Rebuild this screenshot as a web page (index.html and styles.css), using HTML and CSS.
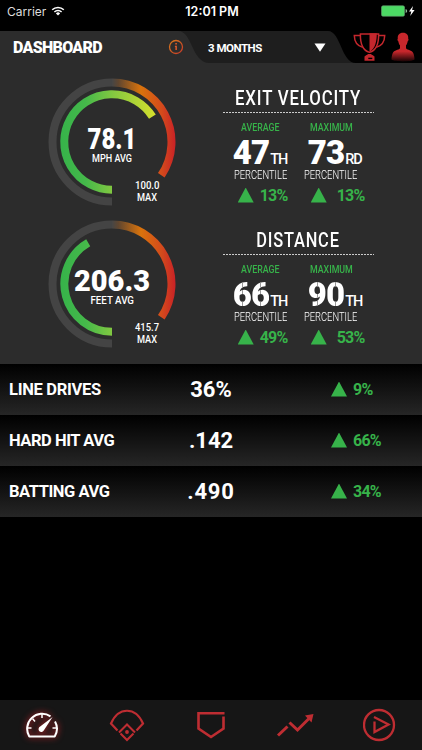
FILE: index.html
```html
<!DOCTYPE html>
<html lang="en">
<head>
    <meta charset="UTF-8">
    <meta name="viewport" content="width=device-width, initial-scale=1.0">
    <title>Dashboard</title>
    <link rel="stylesheet" href="styles.css">
</head>
<body>

    <!-- Phone status bar -->
    <div class="status-bar">
        <div class="carrier">
            <span>Carrier</span>
            <svg width="14" height="10" viewBox="0 0 14 10">
                <path d="M1.2 3.8a8.2 8.2 0 0 1 11.6 0M3.4 6a5.1 5.1 0 0 1 7.2 0" fill="none" stroke="#fff" stroke-width="1.5"/>
                <path d="M4.9 7.4a3 3 0 0 1 4.2 0L7 9.6z" fill="#fff"/>
            </svg>
        </div>
        <div class="time">12:01 PM</div>
        <div class="battery">
            <svg width="36" height="12" viewBox="0 0 36 12">
                <rect x="0.5" y="0.8" width="23" height="10.4" rx="1.5" fill="#4cd964" stroke="#6a9c74" stroke-width="0.6"/>
                <path d="M24.6 4q1.6 .3 1.6 2t-1.6 2z" fill="#8fbf98"/>
                <path d="M32 1l-4 5.6h2.3L29.2 11l4.4-6h-2.5z" fill="#fff"/>
            </svg>
        </div>
    </div>

    <!-- Header -->
    <div class="header">
        <svg class="header-shape" width="422" height="32" viewBox="0 0 422 32">
            <rect width="422" height="32" fill="#000"/>
            <path d="M170 0H328C341 0 341 32 356 32H170z" fill="#1e1e1e"/>
            <path d="M0 0H178C193 0 191 32 210 32H0z" fill="#2c2c2c"/>
        </svg>
        <h1>DASHBOARD</h1>
        <svg class="info" width="16" height="16" viewBox="0 0 16 16">
            <defs>
                <linearGradient id="infoFill" x1="0" y1="0" x2="1" y2="1">
                    <stop offset="0" stop-color="#d87a1c"/>
                    <stop offset="1" stop-color="#c93a28"/>
                </linearGradient>
            </defs>
            <circle cx="8" cy="8" r="6.5" fill="none" stroke="url(#infoFill)" stroke-width="1.3"/>
            <path d="M7.3 4h1.6v1.6H7.3zM6.9 6.8h2V11H7.4V8h-.5z" fill="#dc592a"/>
        </svg>
        <span class="period">3 MONTHS</span>
        <svg class="caret" width="12" height="9" viewBox="0 0 12 9"><path d="M.5 .5h11L6 8.7z" fill="#fff"/></svg>
        <svg class="trophy" width="33" height="30" viewBox="0 0 33 30">
            <g fill="none" stroke="#c4272d" stroke-width="1.5">
                <path d="M7.4 2h18.2c.2 9-2.3 16.500-9.100 18.400C9.700 18.500 7.200 11 7.400 2z"/>
                <path d="M7 3.600H1.300C1.400 10 4.500 14 9.700 15.400M26 3.600h5.700C31.600 10 28.500 14 23.300 15.400"/>
            </g>
            <path d="M16.500 1.300h7.300c0 8-1.500 15.500-7.300 18.700zM14.500 22h4v2h-4zM11.500 28.800v-4.300l2-1.500h6l2 1.500v4.300z" fill="#c4272d"/>
            <path d="M15.300 25.700h4v1.400h-4z" fill="#000"/>
        </svg>
        <svg class="person" width="24" height="30" viewBox="0 0 24 30">
            <defs>
                <linearGradient id="personFill" x1="0" y1="0" x2="0" y2="1">
                    <stop offset="0.65" stop-color="#c8272c"/>
                    <stop offset="1" stop-color="#1a0405"/>
                </linearGradient>
            </defs>
            <path d="M12 .8c3.800 0 5.600 2.500 5.200 6 .7.500.3 2.200-.6 2.600-.3 1.900-.8 3-1.600 3.900v3c1.500 1.900 5.900 2 7.200 4.700.7 1.500 1.300 4.100 1.300 6.500-3 2.500-20 2.500-23 0 0-2.400.6-5 1.300-6.500C3.100 18.300 7.500 18.200 9 16.300v-3c-.8-.9-1.300-2-1.600-3.900-.9-.4-1.300-2.100-.6-2.600C6.400 3.300 8.200.8 12 .8z" fill="url(#personFill)"/>
        </svg>
    </div>

    <!-- Gauges -->
    <div class="stats">
        <div class="stat">
            <svg class="gauge" width="128" height="128" viewBox="-64 -64 128 128">
                <defs>
                    <linearGradient id="heat" gradientUnits="userSpaceOnUse" x1="0" y1="0" x2="64" y2="0">
                        <stop offset="0" stop-color="#464646"/>
                        <stop offset="0.1" stop-color="#60462f"/>
                        <stop offset="0.45" stop-color="#d9730c"/>
                        <stop offset="0.78" stop-color="#d34a1c"/>
                        <stop offset="1" stop-color="#c92027"/>
                    </linearGradient>
                    <linearGradient id="level" gradientUnits="userSpaceOnUse" x1="-50" y1="0" x2="45" y2="0">
                        <stop offset="0" stop-color="#37b34a"/>
                        <stop offset="0.25" stop-color="#45b94a"/>
                        <stop offset="0.55" stop-color="#86c940"/>
                        <stop offset="1" stop-color="#d8e02c"/>
                    </linearGradient>
                </defs>
                <path class="arc" stroke="#444" d="M0 59.500A59.500 59.500 0 0 1 0 -59.500"/>
                <path class="arc" stroke="url(#heat)" d="M0 -59.500A59.500 59.500 0 0 1 49.300 33.300"/>
                <path class="arc" stroke="url(#level)" d="M0 47.700A47.700 47.700 0 1 1 40.400 -25.300"/>
                <text class="gauge-value" x="-24.500" y="6.500" textLength="49" lengthAdjust="spacingAndGlyphs">78.1</text>
                <text class="gauge-label" x="-20" y="19.700" textLength="40" lengthAdjust="spacingAndGlyphs">MPH AVG</text>
                <text class="gauge-max" x="23" y="46.500" textLength="24.500" lengthAdjust="spacingAndGlyphs">100.0</text>
                <text class="gauge-max" x="25" y="58.700" textLength="20" lengthAdjust="spacingAndGlyphs">MAX</text>
            </svg>
            <div class="ranks">
                <h2><span class="velocity-title">EXIT VELOCITY</span></h2>
                <div class="rank">
                    <div class="rank-label">AVERAGE</div>
                    <div class="rank-value"><b>47</b>TH</div>
                    <div class="percentile">PERCENTILE</div>
                    <div class="change"><i class="up"></i><span class="pct">13%</span></div>
                </div>
                <div class="rank">
                    <div class="rank-label maximum">MAXIMUM</div>
                    <div class="rank-value"><b>73</b>RD</div>
                    <div class="percentile">PERCENTILE</div>
                    <div class="change"><i class="up"></i><span class="pct">13%</span></div>
                </div>
            </div>
        </div>

        <div class="stat">
            <svg class="gauge" width="128" height="128" viewBox="-64 -64 128 128">
                <path class="arc" stroke="#444" d="M0 59.500A59.500 59.500 0 0 1 0 -59.500"/>
                <path class="arc" stroke="url(#heat)" d="M0 -59.500A59.500 59.500 0 0 1 49.300 33.300"/>
                <path class="arc" stroke="url(#level)" d="M0 47.700A47.700 47.700 0 0 1 -23.800 -41.300"/>
                <text class="gauge-value" x="-38" y="6.500" textLength="76" lengthAdjust="spacingAndGlyphs">206.3</text>
                <text class="gauge-label" x="-21.500" y="20" textLength="43.500" lengthAdjust="spacingAndGlyphs">FEET AVG</text>
                <text class="gauge-max" x="23" y="46.700" textLength="24" lengthAdjust="spacingAndGlyphs">415.7</text>
                <text class="gauge-max" x="25" y="59" textLength="20" lengthAdjust="spacingAndGlyphs">MAX</text>
            </svg>
            <div class="ranks">
                <h2><span class="distance-title">DISTANCE</span></h2>
                <div class="rank">
                    <div class="rank-label">AVERAGE</div>
                    <div class="rank-value"><b class="stencil">66</b>TH</div>
                    <div class="percentile">PERCENTILE</div>
                    <div class="change"><i class="up"></i><span class="pct">49%</span></div>
                </div>
                <div class="rank">
                    <div class="rank-label maximum">MAXIMUM</div>
                    <div class="rank-value"><b class="stencil">90</b>TH</div>
                    <div class="percentile">PERCENTILE</div>
                    <div class="change"><i class="up"></i><span class="pct">53%</span></div>
                </div>
            </div>
        </div>
    </div>

    <!-- Stat rows -->
    <div class="rows">
        <div class="row"><span class="row-name">LINE DRIVES</span><span class="row-value">36%</span><i class="up"></i><span class="pct">9%</span></div>
        <div class="row"><span class="row-name">HARD HIT AVG</span><span class="row-value">.142</span><i class="up"></i><span class="pct">66%</span></div>
        <div class="row"><span class="row-name">BATTING AVG</span><span class="row-value wide">.490</span><i class="up"></i><span class="pct">34%</span></div>
    </div>

    <!-- Bottom navigation -->
    <div class="nav">
        <a class="active">
            <svg width="34" height="26" viewBox="0 0 34 26" fill="none" stroke="#fff" stroke-width="2">
                <path d="M25.500 4.300A15 15 0 0 0 4.300 24.500H29.700A15 15 0 0 0 30 9.500" stroke-linejoin="round"/>
                <path d="M17 2v4M7.500 6.500l2.500 3M2.500 16h4M27.500 16h4" stroke-width="1.500"/>
                <path d="M27.600 5L18.900 18.300a2.800 2.800 0 1 1-3.700-3.700z" fill="#fff" stroke="none"/>
            </svg>
        </a>
        <a>
            <svg width="36" height="34" viewBox="0 0 36 34" fill="none" stroke="#be2d32" stroke-width="2.200">
                <path d="M8.500 22.500L2 15.500C9.500-1.500 26.500-1.500 34 15.500L27.500 22.500"/>
                <path d="M10 24.500L18 16.500L26 24.500M11.500 25.500L18 32L24.500 25.500" stroke-width="2"/>
                <circle cx="18" cy="24" r="1.900" fill="#be2d32" stroke="none"/>
            </svg>
        </a>
        <a>
            <svg width="30" height="30" viewBox="0 0 30 30" fill="none" stroke="#be2d32" stroke-width="2.600">
                <path d="M28.500 3.300H2.500V18.500L15 27L27.500 18.500V6.500"/>
            </svg>
        </a>
        <a>
            <svg width="38" height="26" viewBox="0 0 38 26" fill="none" stroke="#be2d32" stroke-width="3">
                <path d="M2 23.500L11.500 14.500M13.500 10.500L21.500 18L33.500 6"/>
                <path d="M29 3.500L37.500 2L35.500 10.500z" fill="#be2d32" stroke="none"/>
            </svg>
        </a>
        <a>
            <svg width="34" height="34" viewBox="0 0 34 34" fill="none" stroke="#be2d32" stroke-width="2.300">
                <circle cx="16" cy="17" r="15"/>
                <path d="M11.500 13.500V24L25.500 16.500L11 9"/>
            </svg>
        </a>
    </div>

</body>
</html>
```
FILE: styles.css
```css
* {
    box-sizing: border-box;
}

body {
    margin: 0;
    width: 422px;
    height: 750px;
    display: flex;
    flex-direction: column;
    overflow: hidden;
    background-color: #000;
    color: #fff;
    font-family: Roboto, "Liberation Sans", sans-serif;
}

h1, h2 {
    margin: 0;
}

svg {
    display: block;
    flex: none;
}

/* Status bar */
.status-bar {
    display: grid;
    grid-template-columns: 1fr auto 1fr;
    align-items: center;
    height: 31px;
    padding: 0 5px 9px 7px;
    font-family: Inter, sans-serif;
    font-size: 12px;
}

.carrier {
    display: flex;
    align-items: center;
    gap: 5px;
    color: #ddd;
}

.time {
    font-weight: 600;
    font-size: 12.500px;
}

.battery {
    justify-self: end;
}

/* Header */
.header {
    position: relative;
    display: flex;
    align-items: center;
    height: 32px;
    padding-left: 13px;
}

.header > * {
    position: relative;
}

.header .header-shape {
    position: absolute;
    left: 0;
    top: 0;
}

.header h1 {
    width: 155px;
    font-size: 16px;
    font-weight: 900;
    letter-spacing: -0.700px;
    padding-top: 1px;
}

.period {
    width: 106px;
    margin-left: 24px;
    font-size: 11.500px;
    font-weight: 700;
    letter-spacing: -0.500px;
    padding-top: 1px;
}

.trophy {
    margin-left: 27px;
}

.person {
    margin-left: 5px;
}

/* Gauges */
.stats {
    height: 300.500px;
    padding: 15px 0 0 47.700px;
    background-color: #2c2c2c;
}

.stat {
    display: flex;
    height: 142px;
}

.arc {
    fill: none;
    stroke-width: 8;
}

.gauge text {
    fill: #fff;
}

.gauge-value {
    font-size: 30px;
    font-weight: 900;
}

.gauge-label, .gauge-max {
    font-size: 11.500px;
    font-weight: 500;
}

.ranks {
    display: grid;
    grid-template-columns: 70px 81px;
    grid-template-rows: 35px auto;
    width: 151px;
    height: 142px;
    margin-left: 47px;
}

.ranks h2 {
    grid-column: 1 / 3;
    height: 35px;
    padding-top: 9px;
    background: repeating-linear-gradient(90deg, #ccc 0 2px, transparent 2px 3px) bottom / 100% 1px no-repeat;
    font-size: 20px;
    line-height: 22px;
    font-weight: 500;
    text-align: center;
    white-space: nowrap;
}

.ranks h2 span {
    display: inline-block;
    letter-spacing: 1px;
    transform: scaleX(0.840);
    margin: 0 -20px;
}

.ranks .distance-title {
    transform: scaleX(0.820);
}

.rank {
    padding-top: 8px;
}

/* Condensed captions, squeezed from the left edge */
.rank-label, .percentile, .rank-value, .pct {
    transform-origin: 0 50%;
}

.rank-label {
    width: 60px;
    height: 14px;
    margin-left: 18px;
    font-size: 11px;
    line-height: 14px;
    font-weight: 500;
    color: #37b34a;
    transform: scaleX(0.800);
}

.rank-label.maximum {
    margin-left: 17px;
}

.rank-value {
    display: flex;
    align-items: baseline;
    height: 33px;
    padding-left: 10px;
    font-size: 14.500px;
    line-height: 36px;
    font-weight: 500;
    letter-spacing: -0.900px;
}

.rank-value b {
    font-size: 33px;
    font-weight: 900;
    margin-right: 1px;
}

.rank + .rank .rank-value {
    padding-left: 15px;
}

/* Thin cuts through the top and bottom of each digit */
.stencil {
    background:
        linear-gradient(90deg, transparent 9px, #999 9px 10px, transparent 10px 27px, #999 27px 28px, transparent 28px),
        #fff;
    background-clip: text;
    color: transparent;
}

.percentile {
    width: 70px;
    margin-left: 11px;
    font-size: 12px;
    line-height: 14px;
    font-weight: 300;
    transform: scaleX(0.780);
}

.change {
    display: flex;
    align-items: center;
    height: 24px;
    padding: 2px 0 0 15px;
}

.rank + .rank .change {
    padding-left: 18px;
}

.rank + .rank .percentile {
    margin-left: 11px;
}

.up {
    flex: none;
    width: 16px;
    height: 15px;
    background-color: #37b34a;
    clip-path: polygon(50% 0, 100% 100%, 0 100%);
}

.pct {
    margin-left: 6px;
    font-size: 16px;
    font-weight: 700;
    letter-spacing: -0.800px;
    color: #37b34a;
}

.rank + .rank .pct {
    margin-left: 10px;
}

/* Rows */
.row {
    display: flex;
    align-items: center;
    height: 51px;
    padding: 0 0 0 9px;
    background: linear-gradient(#000, #262626);
    font-weight: 700;
}

.row-name {
    width: 142px;
    font-size: 16.500px;
    letter-spacing: -0.300px;
}

.row + .row .row-name {
    letter-spacing: -0.450px;
}

.row-value {
    width: 120px;
    font-size: 22px;
    text-align: center;
}

.row-value.wide {
    letter-spacing: 0.800px;
}

.row .up {
    margin-left: 60px;
}

/* Bottom navigation */
.nav {
    display: grid;
    grid-template-columns: repeat(5, 1fr);
    align-items: center;
    justify-items: center;
    height: 50px;
    margin-top: auto;
    background-color: #161616;
}

.active svg {
    filter: drop-shadow(0 0 3px #d8242c);
}
```
